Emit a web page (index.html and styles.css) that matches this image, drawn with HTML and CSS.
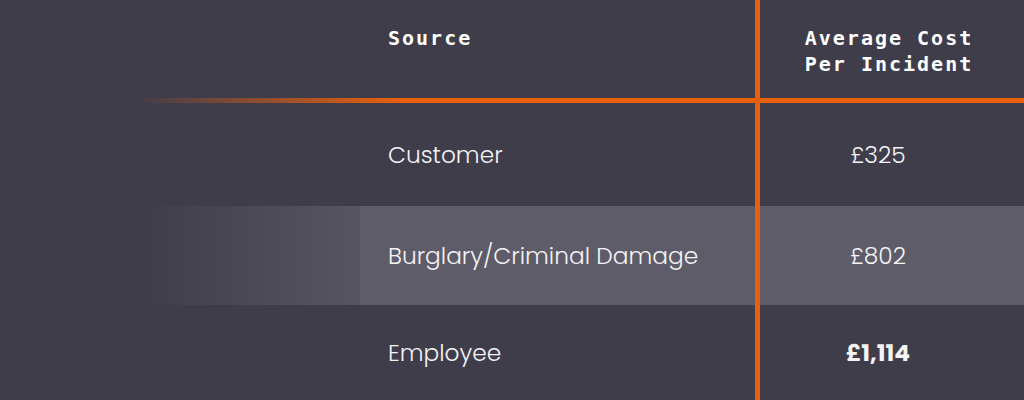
FILE: index.html
```html
<!DOCTYPE html>
<html lang="en">
<head>
<meta charset="utf-8">
<title>Average Cost Per Incident</title>
<link rel="stylesheet" href="styles.css">
</head>
<body>
<div class="table">
  <div class="row head">
    <div class="lead"></div>
    <div class="cell src">Source</div>
    <div class="cell val">Average Cost<br>Per Incident</div>
  </div>
  <div class="rule"></div>
  <div class="row body r1">
    <div class="lead"></div>
    <div class="cell src">Customer</div>
    <div class="cell val">£325</div>
  </div>
  <div class="row body r2 hl">
    <div class="lead"></div>
    <div class="cell src">Burglary/Criminal Damage</div>
    <div class="cell val">£802</div>
  </div>
  <div class="row body r3">
    <div class="lead"></div>
    <div class="cell src">Employee</div>
    <div class="cell val strong">£1,114</div>
  </div>
</div>
</body>
</html>
```
FILE: styles.css
```css
html, body {
  margin: 0;
  padding: 0;
}
body {
  background: #403d4b;
  width: 1024px;
  height: 400px;
  overflow: hidden;
  color: #f4f3f6;
  font-family: "Poppins", "Open Sans", "Noto Sans", sans-serif;
}
.table {
  display: flex;
  flex-direction: column;
}
.row {
  display: flex;
  align-items: stretch;
}
.lead {
  width: 360px;
  flex: none;
}
.cell {
  display: flex;
  align-items: center;
}
.src {
  width: 395px;
  flex: none;
  padding-left: 28px;
  box-sizing: border-box;
}
.val {
  flex: 1;
  justify-content: center;
  text-align: center;
  border-left: 5px solid #e8600e;
  padding-right: 28px;
}
.head {
  height: 98px;
  font-family: "DejaVu Sans Mono", "Liberation Mono", monospace;
  font-weight: bold;
  font-size: 20px;
  letter-spacing: 2px;
  line-height: 26px;
  color: #ffffff;
}
.head .src {
  align-items: flex-start;
  padding-top: 25px;
}
.head .val {
  align-items: flex-start;
  padding-top: 25px;
  padding-right: 6px;
}
.rule {
  height: 5px;
  background: linear-gradient(to right, rgba(232, 96, 14, 0) 135px, #e8600e 400px);
}
.body {
  font-size: 23.3px;
  font-weight: 300;
}
.r1 { height: 103px; }
.r2 { height: 99px; }
.r3 { height: 95px; }
.hl {
  background: linear-gradient(to right, rgba(86, 84, 95, 0) 140px, #57555f 360px, #5e5c68 360px);
}
.strong {
  font-weight: 700;
}
```
